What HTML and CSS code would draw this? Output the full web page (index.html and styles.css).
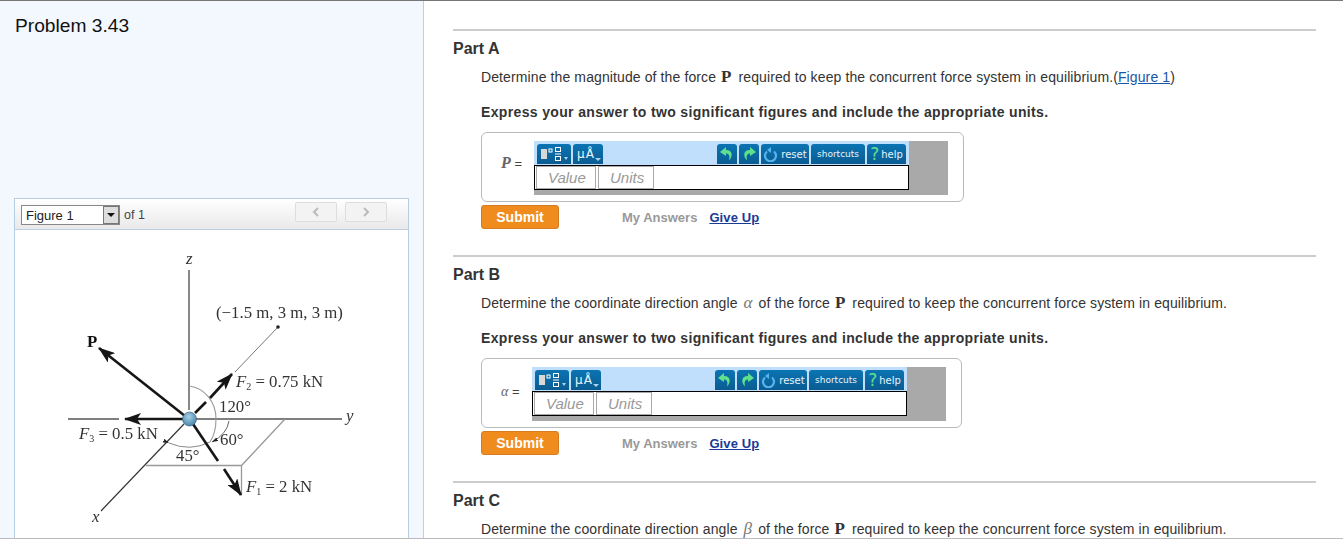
FILE: index.html
```html
<!DOCTYPE html>
<html lang="en">
  <head>
    <meta charset="UTF-8" />
    <title>Problem 3.43</title>
    <link rel="stylesheet" href="styles.css">
  </head>
  <body>
    <div class="page">
      <div class="left">
        <div class="problem-title">Problem 3.43</div>
        <div class="figure-panel">
          <div class="figure-bar">
            <div class="figure-select">
              <span class="figure-name">Figure 1</span>
              <span class="select-btn"><i></i></span>
            </div>
            <span class="figure-of">of 1</span>
            <div class="figure-nav">
              <span class="nav-btn"><svg width="8" height="10" viewBox="0 0 8 10"><path d="M6 1 2 5l4 4" fill="none" stroke="#bbb" stroke-width="2"/></svg></span>
              <span class="nav-btn"><svg width="8" height="10" viewBox="0 0 8 10"><path d="M2 1l4 4-4 4" fill="none" stroke="#bbb" stroke-width="2"/></svg></span>
            </div>
          </div>
          <!-- viewBox starts at the panel's inner corner so numbers are page coords -->
          <svg class="figure-img" width="393" height="310" viewBox="15 230 393 310">
            <defs>
              <marker id="head" viewBox="0 0 17 12" refX="16" refY="6" markerWidth="17" markerHeight="12" markerUnits="userSpaceOnUse" orient="auto">
                <path d="M0 0 17 6 0 12 4 6z" fill="#161616"/>
              </marker>
              <marker id="tick" viewBox="0 0 6 4" refX="6" refY="2" markerWidth="6" markerHeight="4" markerUnits="userSpaceOnUse" orient="auto">
                <path d="M0 0 6 2 0 4z" fill="#222"/>
              </marker>
              <radialGradient id="ball" cx="45%" cy="35%" r="70%">
                <stop offset="0" stop-color="#a9d0e6"/>
                <stop offset="1" stop-color="#3f7fa6"/>
              </radialGradient>
            </defs>
            <g fill="none">
              <path d="M189 270V410" stroke="#555" stroke-width="1.4"/>
              <path d="M68 419H119M195 419H342" stroke="#555" stroke-width="1.4"/>
              <path d="M278 327 235 372" stroke="#777"/>
              <path d="M184 424 101 511" stroke="#333" stroke-width="1.2"/>
              <path d="M146 465.500H241.500L285 419M241.500 465.500V495" stroke="#999" stroke-width="1.3"/>
              <path d="M189 386C205 388 216 402 216 419 216 428 214 436 210 442" stroke="#999" stroke-width="1.1"/>
              <path d="M169 443Q190 452 210 442" stroke="#888" marker-start="url(#tick)"/>
              <path d="M229 421Q227 434 212 442" stroke="#666" marker-end="url(#tick)"/>
              <path d="M185 416 99 348" stroke="#161616" stroke-width="2.6" marker-end="url(#head)"/>
              <path d="M184 419H125" stroke="#161616" stroke-width="2.6" marker-end="url(#head)"/>
              <path d="M195 413 206 402" stroke="#161616" stroke-width="2.6"/>
              <path d="M210 398 232 374" stroke="#161616" stroke-width="2.6" marker-end="url(#head)"/>
              <path d="M193 424 218 461" stroke="#161616" stroke-width="2.6"/>
              <path d="M224 469 241 495" stroke="#161616" stroke-width="2.6" marker-end="url(#head)"/>
            </g>
            <circle cx="278" cy="327" r="1.8" fill="#222"/>
            <circle cx="189.500" cy="419" r="7" fill="url(#ball)" stroke="#2c5a78" stroke-width="0.6"/>
            <g class="fig-text">
              <text x="216" y="318">(−1.5 m, 3 m, 3 m)</text>
              <text class="bold" x="87" y="347">P</text>
              <text x="236" y="387"><tspan class="ital">F</tspan><tspan class="sub" dy="3">2</tspan><tspan dy="-3"> = 0.75 kN</tspan></text>
              <text x="219" y="412">120°</text>
              <text x="79" y="439"><tspan class="ital">F</tspan><tspan class="sub" dy="3">3</tspan><tspan dy="-3"> = 0.5 kN</tspan></text>
              <text x="220" y="445">60°</text>
              <text x="176" y="461">45°</text>
              <text x="246" y="492"><tspan class="ital">F</tspan><tspan class="sub" dy="3">1</tspan><tspan dy="-3"> = 2 kN</tspan></text>
              <text class="ital" x="186" y="264">z</text>
              <text class="ital" x="346" y="421">y</text>
              <text class="ital" x="92" y="522">x</text>
            </g>
          </svg>
        </div>
      </div>

      <div class="right">
        <!-- Part A -->
        <div class="part">
          <h2>Part A</h2>
          <p class="question">Determine the magnitude of the force <b class="vec">P</b> required to keep the concurrent force system in equilibrium.(<a href="#">Figure 1</a>)</p>
          <p class="express">Express your answer to two significant figures and include the appropriate units.</p>
          <div class="answer-box">
            <span class="answer-label"><i class="var">P</i> =</span>
            <div class="editor">
              <div class="editor-main">
                <div class="tools">
                  <span class="tool tool-tpl"><svg width="28" height="16" viewBox="0 0 28 16"><rect x="1" y="3" width="6" height="10" fill="#d8d8d8"/><rect x="9" y="3" width="3" height="3" fill="none" stroke="#fff"/><path d="M15 8H21" stroke="#fff"/><rect x="15.500" y="1.500" width="5" height="4" fill="none" stroke="#fff"/><rect x="15.500" y="10.500" width="5" height="4" fill="none" stroke="#fff"/><path d="M24 11h4l-2 3z" fill="#a9d3f0"/></svg></span>
                  <span class="tool tool-mu">μÅ<i class="caret"></i></span>
                  <span class="tools-gap"></span>
                  <span class="tool tool-sq"><svg width="16" height="16" viewBox="0 0 16 16"><path d="M7 1 1 6l6 4V7.500c3 0 4 2 3 7 4-4 4-10.500-3-10.500z" fill="#5fe08c"/></svg></span>
                  <span class="tool tool-sq"><svg width="16" height="16" viewBox="0 0 16 16"><path d="M9 1l6 5-6 4V7.500c-3 0-4 2-3 7-4-4-4-10.500 3-10.500z" fill="#5fe08c"/></svg></span>
                  <span class="tool tool-reset"><svg width="15" height="15" viewBox="0 0 15 15"><path d="M4 4.500a5.500 5.500 0 1 0 7 0" fill="none" stroke="#58b4ef" stroke-width="2.200"/><path d="M8 0v6L4 3z" fill="#58b4ef"/></svg>reset</span>
                  <span class="tool tool-text">shortcuts</span>
                  <span class="tool tool-help"><em>?</em>help</span>
                </div>
                <div class="inputs">
                  <span class="input-box input-value">Value</span>
                  <span class="input-box input-units">Units</span>
                </div>
              </div>
            </div>
          </div>
          <div class="actions">
            <span class="submit">Submit</span>
            <span class="my-answers">My Answers</span>
            <a class="give-up" href="#">Give Up</a>
          </div>
        </div>

        <!-- Part B -->
        <div class="part">
          <h2>Part B</h2>
          <p class="question">Determine the coordinate direction angle <i class="angle">α</i> of the force <b class="vec">P</b> required to keep the concurrent force system in equilibrium.</p>
          <p class="express">Express your answer to two significant figures and include the appropriate units.</p>
          <div class="answer-box answer-box-angle">
            <span class="answer-label"><i class="var-light">α</i> =</span>
            <div class="editor">
              <div class="editor-main">
                <div class="tools">
                  <span class="tool tool-tpl"><svg width="28" height="16" viewBox="0 0 28 16"><rect x="1" y="3" width="6" height="10" fill="#d8d8d8"/><rect x="9" y="3" width="3" height="3" fill="none" stroke="#fff"/><path d="M15 8H21" stroke="#fff"/><rect x="15.500" y="1.500" width="5" height="4" fill="none" stroke="#fff"/><rect x="15.500" y="10.500" width="5" height="4" fill="none" stroke="#fff"/><path d="M24 11h4l-2 3z" fill="#a9d3f0"/></svg></span>
                  <span class="tool tool-mu">μÅ<i class="caret"></i></span>
                  <span class="tools-gap"></span>
                  <span class="tool tool-sq"><svg width="16" height="16" viewBox="0 0 16 16"><path d="M7 1 1 6l6 4V7.500c3 0 4 2 3 7 4-4 4-10.500-3-10.500z" fill="#5fe08c"/></svg></span>
                  <span class="tool tool-sq"><svg width="16" height="16" viewBox="0 0 16 16"><path d="M9 1l6 5-6 4V7.500c-3 0-4 2-3 7-4-4-4-10.500 3-10.500z" fill="#5fe08c"/></svg></span>
                  <span class="tool tool-reset"><svg width="15" height="15" viewBox="0 0 15 15"><path d="M4 4.500a5.500 5.500 0 1 0 7 0" fill="none" stroke="#58b4ef" stroke-width="2.200"/><path d="M8 0v6L4 3z" fill="#58b4ef"/></svg>reset</span>
                  <span class="tool tool-text">shortcuts</span>
                  <span class="tool tool-help"><em>?</em>help</span>
                </div>
                <div class="inputs">
                  <span class="input-box input-value">Value</span>
                  <span class="input-box input-units">Units</span>
                </div>
              </div>
            </div>
          </div>
          <div class="actions">
            <span class="submit">Submit</span>
            <span class="my-answers">My Answers</span>
            <a class="give-up" href="#">Give Up</a>
          </div>
        </div>

        <!-- Part C -->
        <div class="part">
          <h2>Part C</h2>
          <p class="question">Determine the coordinate direction angle <i class="angle">β</i> of the force <b class="vec">P</b> required to keep the concurrent force system in equilibrium.</p>
        </div>
      </div>
    </div>
  </body>
</html>
```

FILE: styles.css
```css
* {
  padding: 0;
  margin: 0;
  box-sizing: border-box;
}
html,
body {
  height: 539px;
  overflow: hidden;
  background: white;
}
body {
  font-family: "Liberation Sans", Arial, sans-serif;
  color: #333;
}
.page {
  display: flex;
  height: 539px;
  overflow: hidden;
  border-top: 1px solid #777;
  border-bottom: 1px solid #bbb;
}

/* left column */
.left {
  width: 424px;
  flex-shrink: 0;
  padding: 14px 14px 0 14px;
  background: #f3f8ff;
  border-right: 1px solid #c3ccd8;
}
.problem-title {
  height: 183px;
  padding-left: 1px;
  font-size: 19.2px;
  line-height: 21px;
  color: #111;
}
.figure-panel {
  width: 395px;
  height: 400px;
  background: white;
  border: 1px solid #b7cde2;
}
.figure-bar {
  display: flex;
  align-items: center;
  height: 31px;
  padding: 2px 6px 0 6px;
  background: linear-gradient(#fff, #e9e9e9);
  border-bottom: 1px solid #bdcfe0;
}
.figure-select {
  display: flex;
  width: 99px;
  height: 20px;
  background: white;
  border: 1px solid #888;
  font-size: 13px;
  line-height: 19px;
  color: #222;
}
.figure-name {
  flex: 1;
  padding-left: 4px;
}
.select-btn {
  display: flex;
  align-items: center;
  justify-content: center;
  width: 16px;
  background: #ddd;
  border: 1px solid #777;
}
.select-btn i {
  border: 4px solid transparent;
  border-top: 4px solid #111;
  border-bottom: 0;
}
.figure-of {
  margin-left: 4px;
  font-size: 12.5px;
  color: #444;
}
.figure-nav {
  display: flex;
  gap: 8px;
  margin-left: auto;
  margin-right: 15px;
  margin-top: -6px;
}
.nav-btn {
  display: flex;
  align-items: center;
  justify-content: center;
  width: 42px;
  height: 20px;
  background: #f3f3f3;
  border: 1px solid #ddd;
  border-radius: 2px;
}
.figure-img {
  display: block;
  filter: blur(0.3px);
}
.fig-text {
  font-family: "Liberation Serif", "Times New Roman", serif;
  font-size: 16.8px;
  fill: #333;
}
.fig-text .ital {
  font-style: italic;
}
.fig-text .bold {
  font-weight: bold;
  fill: #111;
}
.fig-text .sub {
  font-size: 10px;
}

/* right column */
.right {
  flex: 1;
  padding: 28px 27px 0 29px;
}
.part {
  height: 226px;
  border-top: 2px solid #ccc;
}
h2 {
  margin-top: 8px;
  font-size: 16px;
  line-height: 20px;
  font-weight: bold;
  color: #333;
}
.question {
  margin: 8px 0 0 28px;
  font-size: 14px;
  line-height: 20px;
  letter-spacing: 0.11px;
}
.question a {
  color: #1a56a8;
}
.vec {
  margin: 0 1px;
  font-family: "Liberation Serif", serif;
  font-size: 17px;
  letter-spacing: 2px;
}
.angle {
  margin: 0 2px;
  font-family: "Liberation Serif", serif;
  font-size: 17px;
  color: #777;
}
.express {
  margin: 15px 0 0 28px;
  font-size: 14px;
  line-height: 20px;
  font-weight: bold;
  letter-spacing: 0.35px;
}
.answer-box {
  display: flex;
  width: 483px;
  height: 70px;
  margin: 10px 0 0 28px;
  padding: 8px 0 0 19px;
  border: 1px solid #bbb;
  border-radius: 6px;
}
.answer-box-angle {
  width: 481px;
}
.answer-label {
  width: 33px;
  padding-top: 13px;
  font-size: 13px;
  color: #444;
}
.answer-box-angle .answer-label {
  width: 31px;
  padding-top: 17px;
}
.var {
  font-family: "Liberation Serif", serif;
  font-size: 16px;
  font-weight: bold;
  color: #666;
}
.var-light {
  font-family: "Liberation Serif", serif;
  font-size: 14px;
  color: #666;
}
.editor {
  width: 414px;
  height: 54px;
  background: #a9a9a9;
}
.editor-main {
  width: 375px;
}
.tools {
  display: flex;
  gap: 2px;
  height: 24px;
  padding: 3px 3px 0 3px;
  background: #bfdffc;
}
.tool {
  display: flex;
  align-items: center;
  justify-content: center;
  height: 20px;
  background: linear-gradient(#0b74b2, #0a5c92);
  border-radius: 3px 3px 0 0;
  font-family: "DejaVu Sans", sans-serif;
  font-size: 10px;
  color: #e8f4fb;
}
.tool-tpl {
  width: 34px;
}
.tool-mu {
  position: relative;
  width: 30px;
  padding-right: 4px;
  font-size: 12px;
  letter-spacing: 1px;
}
.caret {
  position: absolute;
  right: 2px;
  bottom: 3px;
  border: 3px solid transparent;
  border-top: 3px solid #a9d3f0;
  border-bottom: 0;
}
.tools-gap {
  flex: 1;
}
.tool-sq {
  width: 20px;
}
.tool-reset {
  gap: 3px;
  width: 48px;
}
.tool-text {
  width: 54px;
  font-size: 9px;
}
.tool-help {
  width: 39px;
}
.tool-help em {
  margin-right: 2px;
  font-size: 17px;
  font-style: normal;
  color: #5fe08c;
}
.inputs {
  display: flex;
  gap: 2px;
  height: 25px;
  padding-left: 1px;
  background: white;
  border: 1px solid black;
}
.input-box {
  width: 60px;
  height: 23px;
  padding-left: 11px;
  border: 1px solid #aaa;
  font-size: 15px;
  font-style: italic;
  line-height: 21px;
  color: #999;
}
.input-units {
  width: 56px;
}
.actions {
  display: flex;
  align-items: center;
  margin: 3px 0 0 28px;
  height: 24px;
  font-size: 13px;
  font-weight: bold;
}
.submit {
  display: flex;
  align-items: center;
  justify-content: center;
  width: 78px;
  height: 24px;
  background: #f08c1e;
  border: 1px solid #d47c1f;
  border-radius: 3px;
  font-size: 14px;
  color: white;
}
.my-answers {
  margin-left: 63px;
  color: #999;
}
.give-up {
  margin-left: 12px;
  letter-spacing: 0.1px;
  color: #1a3a96;
}
```
